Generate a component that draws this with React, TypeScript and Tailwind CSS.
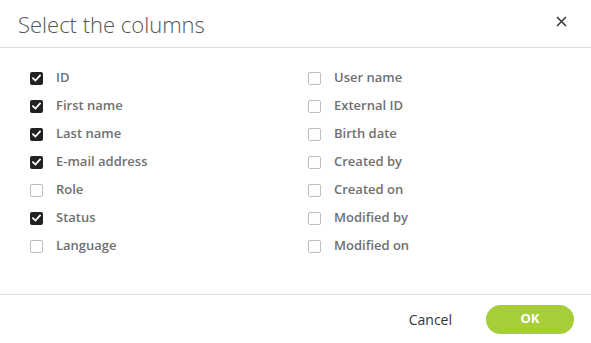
import React from "react";

const left: [string, boolean][] = [
  ["ID", true],
  ["First name", true],
  ["Last name", true],
  ["E-mail address", true],
  ["Role", false],
  ["Status", true],
  ["Language", false],
];
const right: [string, boolean][] = [
  ["User name", false],
  ["External ID", false],
  ["Birth date", false],
  ["Created by", false],
  ["Created on", false],
  ["Modified by", false],
  ["Modified on", false],
];

function Box({ checked }: { checked: boolean }) {
  if (checked) {
    return (
      <span className="flex h-[13px] w-[13px] shrink-0 items-center justify-center rounded-[2px] bg-[#222222]">
        <svg width="9" height="8" viewBox="0 0 9 8" fill="none">
          <path d="M1 4.2L3.4 6.5L8 1.5" stroke="white" strokeWidth="1.7" strokeLinecap="square" />
        </svg>
      </span>
    );
  }
  return <span className="box-border h-[13px] w-[13px] shrink-0 rounded-[2px] border-[1.5px] border-[#bdbdbd] bg-white" />;
}

function Item({ label, checked }: { label: string; checked: boolean }) {
  return (
    <div className="flex h-7 items-center gap-[13px]">
      <Box checked={checked} />
      <span className="text-[13px] font-semibold text-[#707070]">{label}</span>
    </div>
  );
}

export default function App() {
  return (
    <div
      className="flex h-[343px] w-[591px] flex-col bg-white"
      style={{ fontFamily: '"Open Sans", sans-serif' }}
    >
      <div className="flex h-[48px] shrink-0 items-center justify-between border-b border-[#dcdcdc] pl-[18px] pr-[24px]">
        <span className="text-[22px] font-light leading-none text-[#555555]">Select the columns</span>
        <svg width="11" height="11" viewBox="0 0 11 11" className="mt-[-4px]">
          <path d="M1 1L10 10M10 1L1 10" stroke="#333" strokeWidth="1.5" />
        </svg>
      </div>
      <div className="grid flex-1 grid-cols-[278px_1fr] px-[30px] pt-[16px]">
        <div className="flex flex-col">
          {left.map(([l, c]) => (
            <Item key={l} label={l} checked={c} />
          ))}
        </div>
        <div className="flex flex-col">
          {right.map(([l, c]) => (
            <Item key={l} label={l} checked={c} />
          ))}
        </div>
      </div>
      <div className="flex h-[49px] shrink-0 items-center justify-end gap-[34px] border-t border-[#dcdcdc] pr-[17px]">
        <span className="mt-[1px] text-[14px] text-[#333333]">Cancel</span>
        <button className="h-[29px] w-[88px] rounded-full bg-[#a6ce39] text-[13px] font-bold text-white">OK</button>
      </div>
    </div>
  );
}
